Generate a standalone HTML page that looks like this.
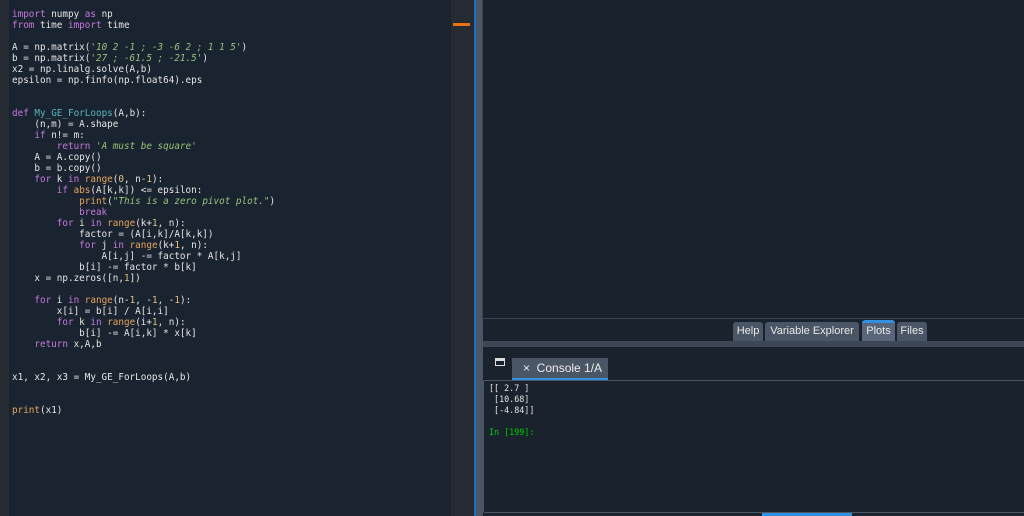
<!DOCTYPE html>
<html><head><style>
*{margin:0;padding:0;box-sizing:border-box}
body{width:1024px;height:516px;background:#19222d;position:relative;overflow:hidden;font-family:"DejaVu Sans Mono","Liberation Mono",monospace}
.a{position:absolute}
pre{position:absolute;left:12px;top:9px;font-family:"DejaVu Sans Mono",monospace;font-size:9.3px;line-height:11px;color:#e6e6e6}
.k{color:#c678dd}.f{color:#56b6c2}.s{color:#98c379;font-style:italic}.b{color:#e5a45c}.n{color:#e5c07b}
.tab{position:absolute;top:322px;height:19px;background:#4a5566;color:#e8e8e8;font:11px "Liberation Sans",sans-serif;line-height:19px;text-align:center;border-radius:3px 3px 0 0}
</style></head><body>
<div class="a" style="left:0;top:0;width:450px;height:516px;background:#1a2330"></div>
<div class="a" style="left:0;top:0;width:9px;height:516px;background:#252a33"></div>
<div class="a" style="left:451px;top:0;width:23px;height:516px;background:#252a33"></div>
<div class="a" style="left:453px;top:23px;width:17px;height:3px;background:#e8730a"></div>
<div class="a" style="left:474px;top:0;width:2px;height:516px;background:#1e6fc0"></div>
<div class="a" style="left:476px;top:0;width:7px;height:516px;background:#4a5566"></div>
<div class="a" style="left:482px;top:0;width:542px;height:319px;border-left:1px solid #3a4452;border-bottom:1px solid #3a4452"></div>
<div class="tab" style="left:733px;width:30px">Help</div>
<div class="tab" style="left:765px;width:94px">Variable Explorer</div>
<div class="tab" style="left:862px;width:33px;background:#59667a;border-top:3px solid #3190e0;top:320px;height:21px;line-height:17px">Plots</div>
<div class="tab" style="left:897px;width:30px">Files</div>
<div class="a" style="left:483px;top:341px;width:541px;height:6px;background:#3d4755"></div>
<div class="a" style="left:495px;top:358px;width:10px;height:8px;border:1.5px solid #ddd;border-top-width:3px"></div>
<div class="a" style="left:512px;top:358px;width:96px;height:22px;background:#4a5566;border-bottom:2px solid #3190e0;color:#eee;font:12px 'Liberation Sans',sans-serif;line-height:21px;padding-left:11px">× &nbsp;Console 1/A</div>
<div class="a" style="left:483px;top:380px;width:545px;height:133px;border:1px solid #4a5566;border-radius:2px"></div>
<div class="a" style="left:762px;top:513px;width:90px;height:3px;background:#3190e0"></div>
<pre class="a" style="left:489px;top:383px;color:#e6e6e6;font-size:8.4px;line-height:11px">[[ 2.7 ]
 [10.68]
 [-4.84]]

<span style="color:#00d000">In [199]:</span></pre>
<pre><span class="k">import</span> numpy <span class="k">as</span> np
<span class="k">from</span> time <span class="k">import</span> time

A = np.matrix(<span class="s">'10 2 -1 ; -3 -6 2 ; 1 1 5'</span>)
b = np.matrix(<span class="s">'27 ; -61.5 ; -21.5'</span>)
x2 = np.linalg.solve(A,b)
epsilon = np.finfo(np.float64).eps


<span class="k">def</span> <span class="f">My_GE_ForLoops</span>(A,b):
    (n,m) = A.shape
    <span class="k">if</span> n!= m:
        <span class="k">return</span> <span class="s">'A must be square'</span>
    A = A.copy()
    b = b.copy()
    <span class="k">for</span> k <span class="k">in</span> <span class="b">range</span>(<span class="n">0</span>, n-<span class="n">1</span>):
        <span class="k">if</span> <span class="b">abs</span>(A[k,k]) &lt;= epsilon:
            <span class="b">print</span>(<span class="s">"This is a zero pivot plot."</span>)
            <span class="k">break</span>
        <span class="k">for</span> i <span class="k">in</span> <span class="b">range</span>(k+<span class="n">1</span>, n):
            factor = (A[i,k]/A[k,k])
            <span class="k">for</span> j <span class="k">in</span> <span class="b">range</span>(k+<span class="n">1</span>, n):
                A[i,j] -= factor * A[k,j]
            b[i] -= factor * b[k]
    x = np.zeros([n,<span class="n">1</span>])

    <span class="k">for</span> i <span class="k">in</span> <span class="b">range</span>(n-<span class="n">1</span>, -<span class="n">1</span>, -<span class="n">1</span>):
        x[i] = b[i] / A[i,i]
        <span class="k">for</span> k <span class="k">in</span> <span class="b">range</span>(i+<span class="n">1</span>, n):
            b[i] -= A[i,k] * x[k]
    <span class="k">return</span> x,A,b


x1, x2, x3 = My_GE_ForLoops(A,b)


<span class="b">print</span>(x1)</pre>
</body></html>
